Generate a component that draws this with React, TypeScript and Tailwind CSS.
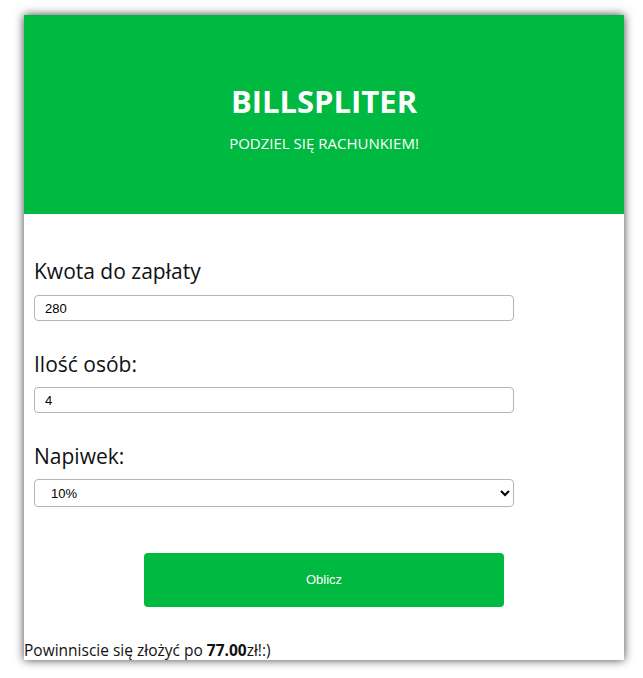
import React, { useState } from "react";

const sans = "font-['Open_Sans','Noto_Sans',sans-serif]";
const arial = "font-['Liberation_Sans',Arial,sans-serif]";

export default function App() {
  const [amount, setAmount] = useState("280");
  const [people, setPeople] = useState("4");
  const [tip, setTip] = useState("0.1");

  const share = ((Number(amount) * (1 + Number(tip))) / Number(people || 1)).toFixed(2);

  return (
    <div className="min-h-[678px] bg-white pt-[15px]">
      <div className={`ml-[24px] w-[600px] bg-white shadow-[0_0_9px_rgba(0,0,0,0.75)] ${sans}`}>
        <header className="flex h-[199px] flex-col items-center justify-center bg-[#00b940] pt-[4px] text-white">
          <h1 className="text-[31px] font-bold leading-[40px]">BILLSPLITER</h1>
          <p className="mt-[12px] text-[15px] leading-[20px]">PODZIEL SIĘ RACHUNKIEM!</p>
        </header>

        <div className="px-[10px] pt-[42px]">
          <label className="block text-[21px] leading-[30px] text-[#111]">Kwota do zapłaty</label>
          <input
            value={amount}
            onChange={(e) => setAmount(e.target.value)}
            className={`mt-[9px] block h-[26px] w-[480px] rounded-[4px] border border-[#b5b5b5] px-[10px] text-[13px] text-black outline-none ${arial}`}
          />

          <label className="mt-[28px] block text-[21px] leading-[30px] text-[#111]">Ilość osób:</label>
          <input
            value={people}
            onChange={(e) => setPeople(e.target.value)}
            className={`mt-[8px] block h-[26px] w-[480px] rounded-[4px] border border-[#b5b5b5] px-[10px] text-[13px] text-black outline-none ${arial}`}
          />

          <label className="mt-[28px] block text-[21px] leading-[30px] text-[#111]">Napiwek:</label>
          <select
            value={tip}
            onChange={(e) => setTip(e.target.value)}
            className={`mt-[8px] block h-[28px] w-[480px] rounded-[4px] border border-[#b5b5b5] bg-white pl-[12px] text-[13px] text-black outline-none ${arial}`}
          >
            <option value="0">0%</option>
            <option value="0.05">5%</option>
            <option value="0.1">10%</option>
            <option value="0.15">15%</option>
            <option value="0.2">20%</option>
          </select>
        </div>

        <div className="mt-[46px] flex justify-center">
          <button className={`h-[54px] w-[360px] rounded-[4px] bg-[#00b940] text-[13px] text-white ${arial}`}>
            Oblicz
          </button>
        </div>

        <p className="mt-[33px] text-[15.5px] leading-[20px] text-[#111]">
          Powinniscie się złożyć po <b>{share}</b>zł!:)
        </p>
      </div>
    </div>
  );
}
